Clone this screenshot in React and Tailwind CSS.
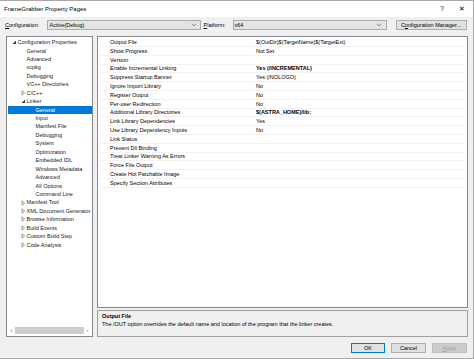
import React from "react";

const FONT = { fontFamily: '"Liberation Sans", Arial, sans-serif' };

const tree = [
  { t: "Configuration Properties", l: 0, e: "open" },
  { t: "General", l: 1 },
  { t: "Advanced", l: 1 },
  { t: "vcpkg", l: 1 },
  { t: "Debugging", l: 1 },
  { t: "VC++ Directories", l: 1 },
  { t: "C/C++", l: 1, e: "closed" },
  { t: "Linker", l: 1, e: "open" },
  { t: "General", l: 2, sel: true },
  { t: "Input", l: 2 },
  { t: "Manifest File", l: 2 },
  { t: "Debugging", l: 2 },
  { t: "System", l: 2 },
  { t: "Optimization", l: 2 },
  { t: "Embedded IDL", l: 2 },
  { t: "Windows Metadata", l: 2 },
  { t: "Advanced", l: 2 },
  { t: "All Options", l: 2 },
  { t: "Command Line", l: 2 },
  { t: "Manifest Tool", l: 1, e: "closed" },
  { t: "XML Document Generator", l: 1, e: "closed" },
  { t: "Browse Information", l: 1, e: "closed" },
  { t: "Build Events", l: 1, e: "closed" },
  { t: "Custom Build Step", l: 1, e: "closed" },
  { t: "Code Analysis", l: 1, e: "closed" },
];

const levelPad = ["pl-[3px]", "pl-[12px]", "pl-[21px]"];

const props = [
  ["Output File", "$(OutDir)$(TargetName)$(TargetExt)"],
  ["Show Progress", "Not Set"],
  ["Version", ""],
  ["Enable Incremental Linking", "Yes (/INCREMENTAL)", true],
  ["Suppress Startup Banner", "Yes (/NOLOGO)"],
  ["Ignore Import Library", "No"],
  ["Register Output", "No"],
  ["Per-user Redirection", "No"],
  ["Additional Library Directories", "$(ASTRA_HOME)/lib;", true],
  ["Link Library Dependencies", "Yes"],
  ["Use Library Dependency Inputs", "No"],
  ["Link Status", ""],
  ["Prevent Dll Binding", ""],
  ["Treat Linker Warning As Errors", ""],
  ["Force File Output", ""],
  ["Create Hot Patchable Image", ""],
  ["Specify Section Attributes", ""],
];

function Arrow({ e, sel }) {
  if (e === "open")
    return (
      <svg width="7" height="8" viewBox="0 0 7 8">
        <path d="M5 2.5 L5 6 L1.5 6 Z" fill={sel ? "#fff" : "#404040"} />
      </svg>
    );
  if (e === "closed")
    return (
      <svg width="7" height="8" viewBox="0 0 7 8">
        <path d="M2 1.8 L4.6 4 L2 6.2 Z" fill="none" stroke="#707070" strokeWidth="0.7" />
      </svg>
    );
  return null;
}

function Chevron() {
  return (
    <svg width="6" height="4" viewBox="0 0 6 4">
      <path d="M0.8 0.8 L3 3 L5.2 0.8" fill="none" stroke="#606060" strokeWidth="0.7" />
    </svg>
  );
}

export default function App() {
  return (
    <div
      className="w-[474px] h-[359px] bg-[#f0f0f0] border-t border-r border-b border-[#a8a8a8] flex flex-col text-[5.5px] text-black overflow-hidden"
      style={FONT}
    >
      {/* Title bar */}
      <div className="h-[16px] bg-white flex items-center px-[4px] text-[6px]">
        <span className="flex-1">FrameGrabber Property Pages</span>
        <span className="w-[10px] text-center text-[6.5px] mr-[10px]">?</span>
        <span className="w-[10px] text-center text-[7px] mr-[2px]">✕</span>
      </div>

      {/* Config row */}
      <div className="flex items-center h-[10px] mt-[3px] mb-[6px] pl-[5px]">
        <span className="w-[41.5px]">
          <u>C</u>onfiguration:
        </span>
        <div className="w-[154px] h-[10px] bg-[#e5e5e5] border border-[#acacac] flex items-center pl-[2px] pr-[3px]">
          <span className="flex-1">Active(Debug)</span>
          <Chevron />
        </div>
        <span className="ml-[3px] w-[29px]">
          <u>P</u>latform:
        </span>
        <div className="w-[154px] h-[10px] bg-[#e5e5e5] border border-[#acacac] flex items-center pl-[1px] pr-[4px]">
          <span className="flex-1">x64</span>
          <Chevron />
        </div>
        <div className="ml-[9px] w-[71px] h-[10px] bg-[#e1e1e1] border border-[#adadad] flex items-center justify-center">
          C<u>o</u>nfiguration Manager...
        </div>
      </div>

      {/* Main area */}
      <div className="flex h-[301px] pl-[6px] pr-[5px] gap-[4px]">
        {/* Tree */}
        <div className="w-[87px] bg-white border border-[#828790] flex flex-col">
          <div className="flex-1 pt-[1px] px-[0.5px]">
            {tree.map((n, i) => (
              <div
                key={i}
                className={
                  "flex items-center h-[8.45px] whitespace-nowrap " +
                  levelPad[n.l] +
                  (n.sel ? " bg-[#0078d7] text-white" : " text-[#1a1a1a]")
                }
              >
                <span className="w-[7px] flex items-center">
                  <Arrow e={n.e} sel={n.sel} />
                </span>
                <span>{n.t}</span>
              </div>
            ))}
          </div>
          {/* horizontal scrollbar */}
          <div className="h-[9px] mb-[1px] flex items-center px-[1px] text-[#606060]">
            <span className="w-[7px] text-center text-[6px]">‹</span>
            <div className="flex-1 h-[7px] bg-[#cdcdcd]" />
            <span className="w-[7px] text-center text-[6px]">›</span>
          </div>
        </div>

        {/* Right column */}
        <div className="flex-1 flex flex-col gap-[2px]">
          <div className="flex-1 bg-white border border-[#828790] pt-[1.3px] pl-[2px] pr-[1px]">
            {props.map(([k, v, b], i) => (
              <div key={i} className="flex items-center h-[8.8px] border-b border-[#f2f2f2] whitespace-nowrap">
                <span className="w-[152px] pl-[10px]">{k}</span>
                <span className={"pl-[4px] " + (b ? "font-bold" : "")}>{v}</span>
              </div>
            ))}
          </div>
          <div className="h-[27px] border border-[#a0a0a0] bg-[#f0f0f0] px-[4px] pt-[1px] flex flex-col">
            <div className="h-[8px] flex items-center font-bold">Output File</div>
            <div className="h-[8px] flex items-center">
              The /OUT option overrides the default name and location of the program that the linker creates.
            </div>
          </div>
        </div>
      </div>

      {/* Buttons */}
      <div className="flex justify-end gap-[6px] mt-[6px] pr-[6px]">
        <div className="w-[34px] h-[10px] bg-[#e1e1e1] border border-[#0078d7] flex items-center justify-center">
          OK
        </div>
        <div className="w-[35px] h-[10px] bg-[#e1e1e1] border border-[#adadad] flex items-center justify-center">
          Cancel
        </div>
        <div className="w-[35px] h-[10px] bg-[#cccccc] border border-[#bfbfbf] text-[#a0a0a0] flex items-center justify-center">
          <u>A</u>pply
        </div>
      </div>
    </div>
  );
}
